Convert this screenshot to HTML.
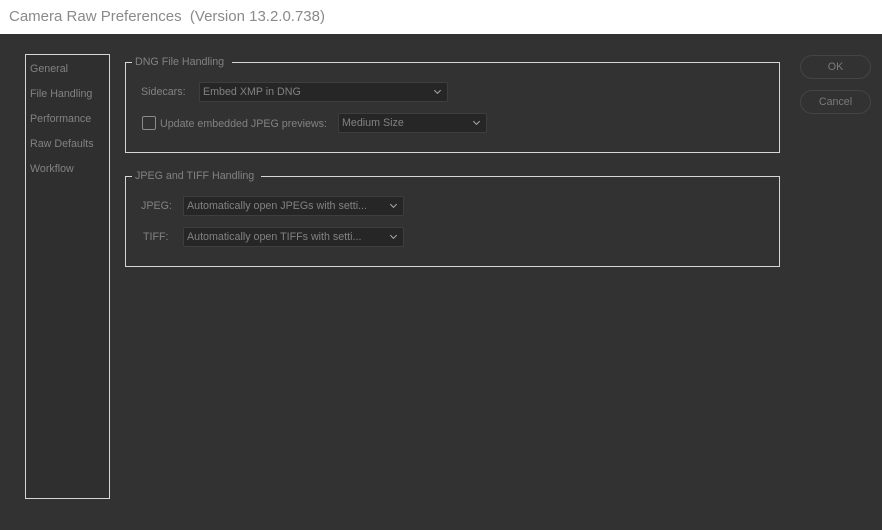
<!DOCTYPE html>
<html><head><style>
*{margin:0;padding:0;box-sizing:border-box}
body{width:882px;height:530px;background:#323232;font-family:"Liberation Sans",sans-serif;font-size:10.7px;color:#828282;position:relative;overflow:hidden}
.t{position:absolute;left:0;top:0;width:882px;height:34px;background:#fff;color:#8a8a8a;font-size:15px;line-height:34px;padding-left:9px}
.a{position:absolute}
.nav{left:25px;top:54px;width:85px;height:445px;border:1px solid #d6d6d6;background:#2f2f2f}
.nav div{position:absolute;left:4px}
.fs{border:1px solid #d6d6d6;border-top:none}
.fs .line{position:absolute;top:0;height:1px;background:#d6d6d6}
.lg{position:absolute;top:-6px;left:9px;color:#828282}
.dd{position:absolute;height:20px;background:#262626;border:1px solid #3e3e3e;border-radius:2px;line-height:19px;padding-left:3px;color:#828282}
.dd:after{content:"";position:absolute;right:7px;top:5px;width:4px;height:4px;border-right:1px solid #aaa;border-bottom:1px solid #aaa;transform:rotate(45deg)}
.btn{position:absolute;left:800px;width:71px;height:24px;border:1px solid #444;border-radius:12px;text-align:center;line-height:23px;color:#7a7a7a}
</style></head><body>
<div class="t">Camera Raw Preferences&nbsp; (Version 13.2.0.738)</div>
<div class="a nav">
<div style="top:8px">General</div>
<div style="top:33px">File Handling</div>
<div style="top:58px">Performance</div>
<div style="top:83px">Raw Defaults</div>
<div style="top:108px">Workflow</div>
</div>
<div class="a fs" style="left:125px;top:62px;width:655px;height:91px">
<div class="line" style="left:0;width:6px"></div>
<div class="line" style="left:106px;right:0"></div>
<div class="lg">DNG File Handling</div>
</div>
<div class="a" style="left:141px;top:86px">Sidecars:</div>
<div class="dd" style="left:199px;top:82px;width:249px">Embed XMP in DNG</div>
<div class="a" style="left:142px;top:116px;width:14px;height:14px;border:1px solid #8a8a8a;border-radius:2px"></div>
<div class="a" style="left:160px;top:118px">Update embedded JPEG previews:</div>
<div class="dd" style="left:338px;top:113px;width:149px">Medium Size</div>
<div class="a fs" style="left:125px;top:176px;width:655px;height:91px">
<div class="line" style="left:0;width:6px"></div>
<div class="line" style="left:135px;right:0"></div>
<div class="lg">JPEG and TIFF Handling</div>
</div>
<div class="a" style="left:141px;top:200px">JPEG:</div>
<div class="dd" style="left:183px;top:196px;width:221px">Automatically open JPEGs with setti...</div>
<div class="a" style="left:143px;top:231px">TIFF:</div>
<div class="dd" style="left:183px;top:227px;width:221px">Automatically open TIFFs with setti...</div>
<div class="btn" style="top:55px">OK</div>
<div class="btn" style="top:90px">Cancel</div>
</body></html>
